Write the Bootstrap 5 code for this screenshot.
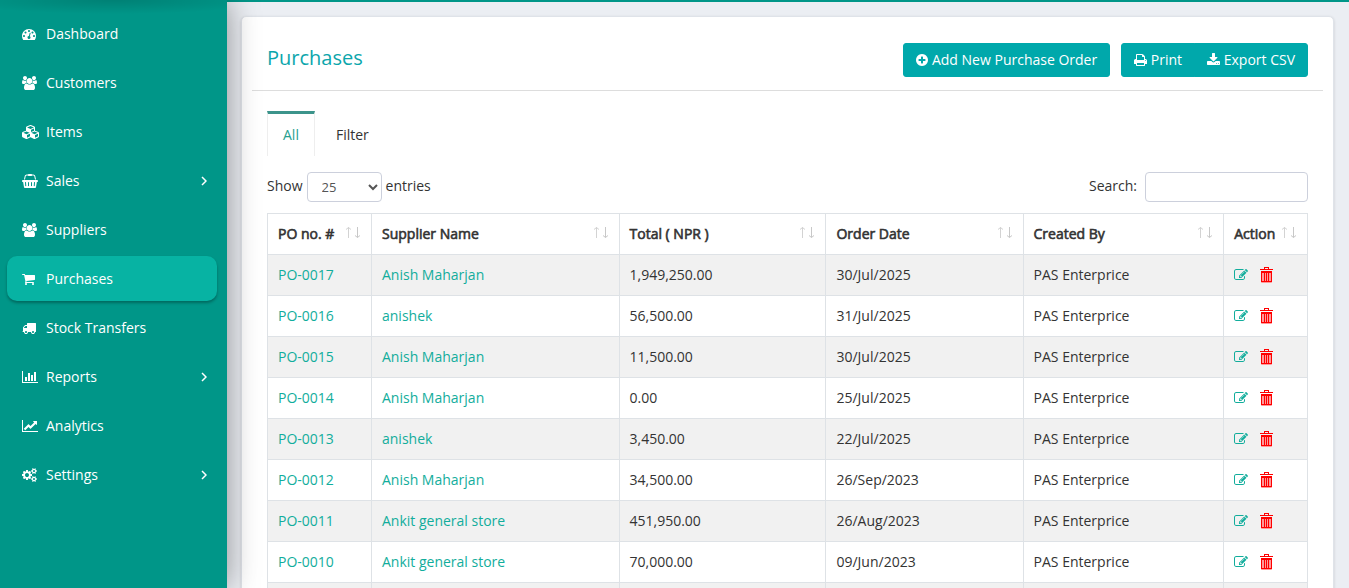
<!DOCTYPE html>
<html lang="en">
<head>
<meta charset="utf-8">
<meta name="viewport" content="width=device-width, initial-scale=1">
<title>Purchases</title>
<link rel="stylesheet" href="https://cdn.jsdelivr.net/npm/bootstrap@5.3.0/dist/css/bootstrap.min.css">
<style>
  body { font-family: "Open Sans", "Noto Sans", sans-serif; font-size: 14px; line-height: 20px; color: #333; background: #ebeef3; }
  a { text-decoration: none; }
  .ico { height: 14px; fill: currentColor; display: inline-block; vertical-align: -2px; }
  .topbar { height: 2px; background: #009688; }
  .sidebar { width: 227px; background: #009688; box-shadow: 0 0 30px rgba(0,0,0,.4); z-index: 2; padding: 11px 10px 0 7px; position: relative; }
  .sidebar::before { content: ""; position: absolute; left: 0; right: 0; top: 0; height: 14px; background: radial-gradient(ellipse 70% 100% at 50% 0, rgba(0,0,0,.14), transparent); }
  .side-link { color: #fff; height: 45px; padding: 0 10px 0 15px; border-radius: 10px; margin-bottom: 4px; }
  .side-link:hover { color: #fff; }
  .side-link.current { background: #07b3a3; box-shadow: 0 2px 3px rgba(0,0,0,.3); }
  .side-icon { width: 24px; line-height: 14px; flex: none; }
  .panel { background: #fff; border: 1px solid #dfe3e9; border-radius: 5px; margin: 14px 15px 0 14px; box-shadow: 0 1px 3px rgba(0,0,0,.15); padding: 0 10px; }
  .panel-head { height: 74px; border-bottom: 1px solid #ddd; padding: 9px 15px 0; }
  .panel-head h1 { font-size: 20px; line-height: 24px; color: #0ba6ac; font-weight: 400; }
  .head-actions { padding-top: 3px; gap: 11px; }
  .panel-main { padding: 20px 15px; }
  .act { background: #00a8ab; color: #fff; font-size: 14px; line-height: 20px; padding: 6px 12px; border: 1px solid #00a8ab; border-radius: 3px; }
  .act:hover { background: #009da0; color: #fff; }
  .tab-item { border: 0; background: none; padding: 14px 21px 11px; height: 45px; color: #333; }
  .tab-item.current { border: solid #eee; border-width: 3px 1px 0; border-top-color: #3c948b; color: #26a090; padding: 11px 15px; }
  .list-tools { line-height: 28px; margin-bottom: 11px; }
  .field { height: 30px; border: 1px solid #ccd0dc; border-radius: 4px; background: #fff; color: #555; }
  select.field { width: 75px; font-size: 13px; padding: 0 10px; }
  input.field { width: 163px; padding: 0 10px; }
  .orders { table-layout: fixed; border-color: #dee2e6; --bs-table-color: #333; --bs-table-striped-color: #333; --bs-table-striped-bg: #f1f1f1; }
  .orders th, .orders td { padding: 10px; height: 41px; color: #333; }
  .orders th { font-weight: 400; -webkit-text-stroke: .6px #333; white-space: nowrap; }
  .orders a { color: #12ad9c; }
  .sorter { width: 16px; height: 14px; flex: none; stroke: #c8c8c8; fill: none; margin-top: 2px; }
  .row-tools { height: 20px; }
  .tool { border: 0; background: none; padding: 0; display: flex; }
  .orders .bin { color: #f00; margin-left: 12px; }
</style>
</head>
<body class="vh-100 overflow-hidden">
<svg class="d-none" aria-hidden="true">
  <symbol id="users" viewBox="0 0 1920 1792"><path d="M593 896q-162 5-265 128h-134q-82 0-138-40.500t-56-118.500q0-353 124-353 6 0 43.500 21t97.500 42.500 119 21.500q67 0 133-23-5 37-5 66 0 139 81 256zm1071 637q0 120-73 189.500t-194 69.500h-874q-121 0-194-69.500t-73-189.500q0-53 3.500-103.500t14-109 26.500-108.500 43-97.500 62-81 85.500-53.500 111.500-20q10 0 43 21.500t73 48 107 48 135 21.500 135-21.500 107-48 73-48 43-21.500q61 0 111.500 20t85.500 53.500 62 81 43 97.500 26.500 108.500 14 109 3.500 103.500zm-1024-1277q0 106-75 181t-181 75-181-75-75-181 75-181 181-75 181 75 75 181zm704 384q0 159-112.500 271.500t-271.500 112.500-271.500-112.500-112.500-271.500 112.500-271.500 271.500-112.500 271.500 112.500 112.500 271.500zm576 225q0 78-56 118.500t-138 40.500h-134q-103-123-265-128 81-117 81-256 0-29-5-66 66 23 133 23 59 0 119-21.500t97.500-42.500 43.500-21q124 0 124 353zm-128-609q0 106-75 181t-181 75-181-75-75-181 75-181 181-75 181 75 75 181z"/></symbol>
  <symbol id="edit" viewBox="0 0 1792 1792"><path d="M888 1184l116-116-152-152-116 116v56h96v96h56zm440-720q-16-16-33 1l-350 350q-17 17-1 33t33-1l350-350q17-17 1-33zm80 594v190q0 119-84.500 203.500t-203.500 84.500h-832q-119 0-203.500-84.500t-84.500-203.500v-832q0-119 84.500-203.500t203.500-84.500h832q63 0 117 25 15 7 18 23 3 17-9 29l-49 49q-14 14-32 8-23-6-45-6h-832q-66 0-113 47t-47 113v832q0 66 47 113t113 47h832q66 0 113-47t47-113v-126q0-13 9-22l64-64q15-15 35-7t20 29zm-96-738l288 288-672 672h-288v-288zm444 132l-92 92-288-288 92-92q28-28 68-28t68 28l152 152q28 28 28 68t-28 68z"/></symbol>
  <symbol id="bin" viewBox="0 0 13 16"><path d="M4 0h5v2h4v1H0V2h4zM5 1v1h3V1z"/><path d="M1 4h11v11q0 1-1 1H2q-1 0-1-1z" fill="#f99"/><path d="M1 4h11v2H1zM1 5h1v10H1zM4 5h1v10H4zM6 5h1v10H6zM8 5h1v10H8zM11 5h1v10h-1zM1 14h11v1H1z"/></symbol>
  <symbol id="sort" viewBox="0 0 16 14"><path d="M3.500 12V1.500M1 3.500l2.500-2L6 3.500" opacity=".8"/><path d="M12.500 1v10.500M10 9.500l2.500 2 2.500-2"/></symbol>
  <symbol id="chev" viewBox="0 0 6 10"><path d="M1 1l4 4-4 4" fill="none" stroke="#fff" stroke-width="1.500"/></symbol>
</svg>
<div class="d-flex h-100">
  <nav class="sidebar flex-shrink-0" aria-label="Main">
    <a href="#" class="side-link d-flex align-items-center"><span class="side-icon"><svg class="ico" viewBox="0 0 1792 1792"><path d="M384 1152q0-53-37.500-90.500t-90.500-37.500-90.500 37.500-37.500 90.500 37.500 90.500 90.500 37.500 90.500-37.500 37.500-90.500zm192-448q0-53-37.500-90.500t-90.500-37.500-90.500 37.500-37.500 90.500 37.500 90.500 90.500 37.500 90.500-37.500 37.500-90.500zm428 481l101-382q6-26-7.500-48.500t-38.500-29.500-48 6.500-30 39.500l-101 382q-60 5-107 43.500t-63 98.500q-20 77 20 146t117 89 146-20 89-117q16-60-6-117t-72-91zm660-33q0-53-37.500-90.500t-90.500-37.500-90.500 37.500-37.500 90.500 37.500 90.500 90.500 37.500 90.500-37.500 37.500-90.500zm-640-640q0-53-37.500-90.500t-90.500-37.500-90.500 37.500-37.500 90.500 37.500 90.500 90.500 37.500 90.500-37.500 37.500-90.500zm448 192q0-53-37.500-90.500t-90.500-37.500-90.500 37.500-37.500 90.500 37.500 90.500 90.500 37.500 90.500-37.500 37.500-90.500zm320 448q0 261-141 483-19 29-54 29h-1402q-35 0-54-29-141-221-141-483 0-182 71-348t191-286 286-191 348-71 348 71 286 191 191 286 71 348z"/></svg></span>Dashboard</a>
    <a href="#" class="side-link d-flex align-items-center"><span class="side-icon"><svg class="ico" width="15"><use href="#users"/></svg></span>Customers</a>
    <a href="#" class="side-link d-flex align-items-center"><span class="side-icon"><svg class="ico" viewBox="0 0 2304 1792"><path d="M640 1632l384-192v-314l-384 164v342zm-64-454l404-173-404-173-404 173zm1088 454l384-192v-314l-384 164v342zm-64-454l404-173-404-173-404 173zm-448-293l384-165v-266l-384 164v267zm-64-379l441-189-441-189-441 189zm1088 518v416q0 36-19 67t-52 47l-448 224q-25 14-57 14t-57-14l-448-224q-4-2-7-4-2 2-7 4l-448 224q-25 14-57 14t-57-14l-448-224q-33-16-52-47t-19-67v-416q0-38 21.500-70t56.500-48l434-186v-400q0-38 21.500-70t56.500-48l448-192q23-10 50-10t50 10l448 192q35 16 56.500 48t21.500 70v400l434 186q36 16 57 48t21 70z"/></svg></span>Items</a>
    <a href="#" class="side-link d-flex align-items-center"><span class="side-icon"><svg class="ico" viewBox="0 0 2048 1792"><path d="M1920 768q53 0 90.500 37.500t37.500 90.500-37.500 90.500-90.500 37.500h-15l-115 662q-8 46-44 76t-82 30h-1280q-46 0-82-30t-44-76l-115-662h-15q-53 0-90.500-37.500t-37.500-90.500 37.500-90.500 90.500-37.500h1792zm-1435 800q26-2 43.500-22.500t15.500-46.500l-32-416q-2-26-22.500-43.500t-46.500-15.500-43.500 22.500-15.500 46.500l32 416q2 25 20.500 42t43.500 17h5zm411-64v-416q0-26-19-45t-45-19-45 19-19 45v416q0 26 19 45t45 19 45-19 19-45zm384 0v-416q0-26-19-45t-45-19-45 19-19 45v416q0 26 19 45t45 19 45-19 19-45zm352 5l32-416q2-26-15.500-46.500t-43.500-22.500-46.500 15.500-22.500 43.500l-32 416q-2 26 15.500 46.500t43.500 22.500h5q25 0 43.500-17t20.500-42zm-1156-1217l-93 412h-132l101-441q19-88 89-143.500t160-55.500h167q0-26 19-45t45-19h384q26 0 45 19t19 45h167q90 0 160 55.500t89 143.500l101 441h-132l-93-412q-11-44-45.500-72t-79.500-28h-167q0 26-19 45t-45 19h-384q-26 0-45-19t-19-45h-167q-45 0-79.500 28t-45.500 72z"/></svg></span>Sales<svg class="ms-auto" width="6" height="10"><use href="#chev"/></svg></a>
    <a href="#" class="side-link d-flex align-items-center"><span class="side-icon"><svg class="ico" width="15"><use href="#users"/></svg></span>Suppliers</a>
    <a href="#" class="side-link current d-flex align-items-center" aria-current="page"><span class="side-icon"><svg class="ico" viewBox="64 0 1664 1792"><path d="M704 1536q0 52-38 90t-90 38-90-38-38-90 38-90 90-38 90 38 38 90zm896 0q0 52-38 90t-90 38-90-38-38-90 38-90 90-38 90 38 38 90zm128-1088v512q0 24-16.500 42.500t-40.500 21.500l-1044 122q13 60 13 70 0 16-24 64h920q26 0 45 19t19 45-19 45-45 19h-1024q-26 0-45-19t-19-45q0-11 8-31.500t16-36 21.500-40 15.500-29.500l-177-823h-204q-26 0-45-19t-19-45 19-45 45-19h256q16 0 28.500 6.500t19.500 15.500 13 24.500 8 26 5.500 29.500 4.500 26h1201q26 0 45 19t19 45z"/></svg></span>Purchases</a>
    <a href="#" class="side-link d-flex align-items-center"><span class="side-icon"><svg class="ico" viewBox="0 0 1792 1792"><path d="M640 1408q0-52-38-90t-90-38-90 38-38 90 38 90 90 38 90-38 38-90zm-384-512h384v-256h-158q-13 0-22 9l-195 195q-9 9-9 22v30zm1280 512q0-52-38-90t-90-38-90 38-38 90 38 90 90 38 90-38 38-90zm256-1088v1024q0 15-4 26.500t-13.500 18.500-16.500 11.500-23.500 6-22.500 2-25.500 0-22.500-.5q0 106-75 181t-181 75-181-75-75-181h-384q0 106-75 181t-181 75-181-75-75-181h-64q-3 0-22.500.5t-25.500 0-22.500-2-23.500-6-16.500-11.500-13.500-18.500-4-26.500q0-26 19-45t45-19v-320q0-8-.5-35t0-38 2.500-34.500 6.500-37 14-30.500 22.500-30l198-198q19-19 50.500-32t58.500-13h160v-192q0-26 19-45t45-19h1024q26 0 45 19t19 45z"/></svg></span>Stock Transfers</a>
    <a href="#" class="side-link d-flex align-items-center"><span class="side-icon"><svg class="ico" viewBox="0 0 2048 1792"><path d="M640 896v512h-256v-512h256zm384-512v1024h-256v-1024h256zm1024 1152v128h-2048v-1536h128v1408h1920zm-640-896v768h-256v-768h256zm384-384v1152h-256v-1152h256z"/></svg></span>Reports<svg class="ms-auto" width="6" height="10"><use href="#chev"/></svg></a>
    <a href="#" class="side-link d-flex align-items-center"><span class="side-icon"><svg class="ico" viewBox="0 0 2048 1792"><path d="M2048 1536v128h-2048v-1536h128v1408h1920zm-128-1248v435q0 21-19.500 29.500t-35.500-7.500l-121-121-633 633q-10 10-23 10t-23-10l-233-233-416 416-192-192 585-585q10-10 23-10t23 10l233 233 464-464-121-121q-16-16-7.500-35.500t29.500-19.500h435q14 0 23 9t9 23z"/></svg></span>Analytics</a>
    <a href="#" class="side-link d-flex align-items-center"><span class="side-icon"><svg class="ico" viewBox="0 0 1920 1792"><path d="M896 896q0-106-75-181t-181-75-181 75-75 181 75 181 181 75 181-75 75-181zm768 512q0-52-38-90t-90-38-90 38-38 90q0 53 37.500 90.500t90.500 37.500 90.500-37.500 37.500-90.500zm0-1024q0-52-38-90t-90-38-90 38-38 90q0 53 37.500 90.500t90.500 37.500 90.500-37.500 37.500-90.500zm-384 421v185q0 10-7 19.500t-16 10.500l-155 24q-11 35-32 76 34 48 90 115 7 11 7 20 0 12-7 19-23 30-82.500 89.500t-78.500 59.500q-11 0-21-7l-115-90q-37 19-77 31-11 108-23 155-7 24-30 24h-186q-11 0-20-7.500t-10-17.500l-23-153q-34-10-75-31l-118 89q-7 7-20 7-11 0-21-8-144-133-144-160 0-9 7-19 10-14 41-53t47-61q-23-44-35-82l-152-24q-10-1-17-9.500t-7-19.500v-185q0-10 7-19.500t16-10.500l155-24q11-35 32-76-34-48-90-115-7-11-7-20 0-12 7-20 22-30 82-89t79-59q11 0 21 7l115 90q34-18 77-32 11-108 23-154 7-24 30-24h186q11 0 20 7.500t10 17.500l23 153q34 10 75 31l118-89q8-7 20-7 11 0 21 8 144 133 144 160 0 8-7 19-12 16-42 54t-45 60q23 48 34 82l152 23q10 2 17 10.500t7 19.500zm640 533v140q0 16-149 31-12 27-30 52 51 113 51 138 0 4-4 7-122 71-124 71-8 0-46-47t-52-68q-20 2-30 2t-30-2q-14 21-52 68t-46 47q-2 0-124-71-4-3-4-7 0-25 51-138-18-25-30-52-149-15-149-31v-140q0-16 149-31 13-29 30-52-51-113-51-138 0-4 4-7 4-2 35-20t59-34 30-16q8 0 46 46.500t52 67.500q20-2 30-2t30 2q51-71 92-112l6-2q4 0 124 70 4 3 4 7 0 25-51 138 17 23 30 52 149 15 149 31zm0-1024v140q0 16-149 31-12 27-30 52 51 113 51 138 0 4-4 7-122 71-124 71-8 0-46-47t-52-68q-20 2-30 2t-30-2q-14 21-52 68t-46 47q-2 0-124-71-4-3-4-7 0-25 51-138-18-25-30-52-149-15-149-31v-140q0-16 149-31 13-29 30-52-51-113-51-138 0-4 4-7 4-2 35-20t59-34 30-16q8 0 46 46.500t52 67.500q20-2 30-2t30 2q51-71 92-112l6-2q4 0 124 70 4 3 4 7 0 25-51 138 17 23 30 52 149 15 149 31z"/></svg></span>Settings<svg class="ms-auto" width="6" height="10"><use href="#chev"/></svg></a>
  </nav>
  <main class="flex-grow-1 overflow-hidden">
    <div class="topbar"></div>
    <section class="panel">
      <header class="panel-head d-flex align-items-center justify-content-between">
        <h1 class="m-0">Purchases</h1>
        <div class="head-actions d-flex">
          <button type="button" class="btn act"><svg class="ico" viewBox="128 0 1536 1792"><path d="M1344 960v-128q0-26-19-45t-45-19h-256v-256q0-26-19-45t-45-19h-128q-26 0-45 19t-19 45v256h-256q-26 0-45 19t-19 45v128q0 26 19 45t45 19h256v256q0 26 19 45t45 19h128q26 0 45-19t19-45v-256h256q26 0 45-19t19-45zm320-64q0 209-103 385.500t-279.500 279.500-385.500 103-385.500-103-279.500-279.500-103-385.500 103-385.500 279.500-279.500 385.500-103 385.500 103 279.500 279.500 103 385.500z"/></svg> Add New Purchase Order</button>
          <div class="btn-group">
            <button type="button" class="btn act"><svg class="ico" viewBox="64 0 1664 1792"><path d="M448 1536h896v-256h-896v256zm0-640h896v-384h-160q-40 0-68-28t-28-68v-160h-640v640zm1152 64q0-26-19-45t-45-19-45 19-19 45 19 45 45 19 45-19 19-45zm128 0v416q0 13-9.500 22.500t-22.500 9.500h-224v160q0 40-28 68t-68 28h-960q-40 0-68-28t-28-68v-160h-224q-13 0-22.500-9.500t-9.500-22.500v-416q0-79 56.500-135.500t135.500-56.500h64v-544q0-40 28-68t68-28h672q40 0 88 20t76 48l152 152q28 28 48 76t20 88v256h64q79 0 135.500 56.500t56.500 135.500z"/></svg> Print</button>
            <button type="button" class="btn act"><svg class="ico" viewBox="64 0 1664 1792"><path d="M1344 1344q0-26-19-45t-45-19-45 19-19 45 19 45 45 19 45-19 19-45zm256 0q0-26-19-45t-45-19-45 19-19 45 19 45 45 19 45-19 19-45zm128-224v320q0 40-28 68t-68 28h-1472q-40 0-68-28t-28-68v-320q0-40 28-68t68-28h465l135 136q58 56 136 56t136-56l136-136h464q40 0 68 28t28 68zm-325-569q17 41-14 70l-448 448q-18 19-45 19t-45-19l-448-448q-31-29-14-70 17-39 59-39h256v-448q0-26 19-45t45-19h256q26 0 45 19t19 45v448h256q42 0 59 39z"/></svg> Export CSV</button>
          </div>
        </div>
      </header>
      <div class="panel-main">
        <div class="d-flex mb-3" role="tablist">
          <button type="button" role="tab" class="tab-item current" aria-selected="true">All</button>
          <button type="button" role="tab" class="tab-item" aria-selected="false">Filter</button>
        </div>
        <div class="list-tools d-flex justify-content-between">
          <div class="d-flex gap-1"><label for="len">Show</label><select id="len" class="field"><option>10</option><option selected>25</option><option>50</option></select><span>entries</span></div>
          <div class="d-flex"><label for="q" class="pe-1 me-1">Search:</label><input id="q" type="search" class="field"></div>
        </div>
        <table class="table table-bordered table-striped orders">
          <colgroup><col style="width:10%"><col style="width:23.800%"><col style="width:19.900%"><col style="width:18.950%"><col style="width:19.300%"><col></colgroup>
          <thead><tr>
            <th scope="col"><div class="d-flex justify-content-between">PO no. #<svg class="sorter me-n1"><use href="#sort"/></svg></div></th>
            <th scope="col"><div class="d-flex justify-content-between">Supplier Name<svg class="sorter"><use href="#sort"/></svg></div></th>
            <th scope="col"><div class="d-flex justify-content-between">Total ( NPR )<svg class="sorter"><use href="#sort"/></svg></div></th>
            <th scope="col"><div class="d-flex justify-content-between">Order Date<svg class="sorter"><use href="#sort"/></svg></div></th>
            <th scope="col"><div class="d-flex justify-content-between">Created By<svg class="sorter"><use href="#sort"/></svg></div></th>
            <th scope="col"><div class="d-flex justify-content-between">Action<svg class="sorter"><use href="#sort"/></svg></div></th>
          </tr></thead>
          <tbody id="rows"></tbody>
        </table>
      </div>
    </section>
  </main>
</div>
<script src="https://cdn.jsdelivr.net/npm/bootstrap@5.3.0/dist/js/bootstrap.bundle.min.js"></script>
<script>
  const orders = [
    ['PO-0017', 'Anish Maharjan', '1,949,250.00', '30/Jul/2025'],
    ['PO-0016', 'anishek', '56,500.00', '31/Jul/2025'],
    ['PO-0015', 'Anish Maharjan', '11,500.00', '30/Jul/2025'],
    ['PO-0014', 'Anish Maharjan', '0.00', '25/Jul/2025'],
    ['PO-0013', 'anishek', '3,450.00', '22/Jul/2025'],
    ['PO-0012', 'Anish Maharjan', '34,500.00', '26/Sep/2023'],
    ['PO-0011', 'Ankit general store', '451,950.00', '26/Aug/2023'],
    ['PO-0010', 'Ankit general store', '70,000.00', '09/Jun/2023']
  ];
  document.getElementById('rows').innerHTML = orders.map(([no, who, total, date]) => `<tr>
    <td><a href="#">${no}</a></td><td><a href="#">${who}</a></td><td>${total}</td><td>${date}</td><td>PAS Enterprice</td>
    <td><div class="row-tools d-flex align-items-center"><a href="#" class="tool" aria-label="Edit ${no}"><svg class="ico" width="14"><use href="#edit"/></svg></a><button type="button" class="tool bin" aria-label="Delete ${no}"><svg width="13" height="16" fill="currentColor"><use href="#bin"/></svg></button></div></td></tr>`).join('')
    + '<tr>' + '<td></td>'.repeat(6) + '</tr>';
</script>
</body>
</html>
